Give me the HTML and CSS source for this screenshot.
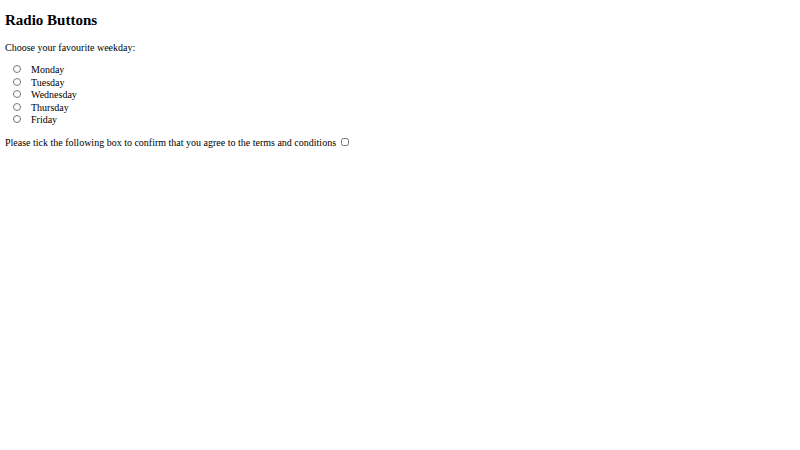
FILE: index.html
```html
<!DOCTYPE html>
<html lang="en">
<head>
    <meta charset="UTF-8">
    <title>Radio Buttons</title>
    <link rel="stylesheet" href="styles.css">
</head>
<body>
    <h2 class="title">Radio Buttons</h2>
    <p class="question">Choose your favourite weekday:</p>
    <div class="options">
        <input type="radio" name="day" id="monday" class="radio"><label for="monday" class="option">Monday</label><br>
        <input type="radio" name="day" id="tuesday" class="radio"><label for="tuesday" class="option">Tuesday</label><br>
        <input type="radio" name="day" id="wednesday" class="radio"><label for="wednesday" class="option">Wednesday</label><br>
        <input type="radio" name="day" id="thursday" class="radio"><label for="thursday" class="option">Thursday</label><br>
        <input type="radio" name="day" id="friday" class="radio"><label for="friday" class="option">Friday</label>
    </div>
    <p class="terms">Please tick the following box to confirm that you agree to the terms and conditions <input type="checkbox" class="check"></p>
</body>
</html>
```

FILE: styles.css
```css
body {
    font-family: "Liberation Serif", serif;
    font-size: 10px;
    margin: 5px;
    color: #000;
    background: #fff;
}
.title {
    font-size: 15px;
    margin: 6.5px 0 13.5px;
}
.question {
    margin: 11px 0;
}
.options {
    padding-left: 5px;
    line-height: 12.5px;
}
.radio {
    width: 8px;
    height: 8px;
    margin: 1px 2px 0 3px;
}
.option {
    margin-left: 8px;
}
.terms {
    margin: 9px 0 10px;
}
.check {
    width: 8px;
    height: 8px;
    margin: 2px 2px 2px 2.5px;
}
```
